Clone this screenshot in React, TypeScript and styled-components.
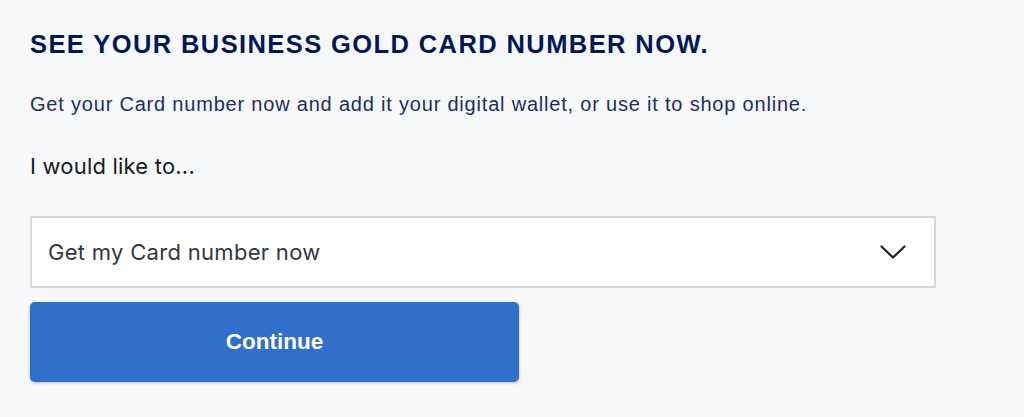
import styled, { createGlobalStyle } from "styled-components";

const GlobalStyle = createGlobalStyle`
  html, body {
    margin: 0;
    padding: 0;
    background: #f7f8fa;
  }
  body {
    font-family: "Liberation Sans", Arial, sans-serif;
  }
`;

const StyledPage = styled.div`
  display: flex;
  flex-direction: column;
  padding: 30px 30px 0 30px;
  height: 417px;
  box-sizing: border-box;
  background: #f7f8fa;
`;

const StyledTitle = styled.h1`
  margin: 0;
  font-family: "Liberation Sans", Arial, sans-serif;
  font-size: 25.5px;
  line-height: 28px;
  font-weight: 700;
  letter-spacing: 1.4px;
  color: #00175a;
`;

const StyledIntro = styled.p`
  margin: 34px 0 0 0;
  font-family: "Liberation Sans", Arial, sans-serif;
  font-size: 20px;
  line-height: 24px;
  letter-spacing: 0.8px;
  color: #1c2d68;
`;

const StyledLabel = styled.div`
  margin-top: 36px;
  font-family: Inter, "Open Sans", sans-serif;
  font-size: 22px;
  line-height: 28px;
  letter-spacing: 0.2px;
  color: #1a1a1a;
`;

const StyledSelect = styled.div`
  display: flex;
  align-items: center;
  justify-content: space-between;
  margin-top: 36px;
  width: 906px;
  height: 72px;
  box-sizing: border-box;
  padding: 0 28px 0 16px;
  background: #ffffff;
  border: 2px solid #d7d8da;
  font-family: Inter, "Open Sans", sans-serif;
  font-size: 22px;
  letter-spacing: 0.3px;
  color: #333840;
`;

const StyledButton = styled.button`
  margin-top: 14px;
  width: 489px;
  height: 80px;
  border: none;
  border-radius: 5px;
  background: #316fca;
  box-shadow: 0 1px 3px rgba(0, 0, 0, 0.25);
  color: #ffffff;
  font-family: "Liberation Sans", Arial, sans-serif;
  font-size: 22.5px;
  font-weight: 700;
  cursor: pointer;
`;

function Chevron() {
  return (
    <svg width="26" height="16" viewBox="0 0 26 16" fill="none">
      <path
        d="M1.5 2.5 L13 13.5 L24.5 2.5"
        stroke="#1f1f1f"
        strokeWidth="2.2"
        strokeLinecap="round"
        strokeLinejoin="round"
      />
    </svg>
  );
}

function App() {
  return (
    <StyledPage>
      <GlobalStyle />
      <StyledTitle>SEE YOUR BUSINESS GOLD CARD NUMBER NOW.</StyledTitle>
      <StyledIntro>
        Get your Card number now and add it your digital wallet, or use it to
        shop online.
      </StyledIntro>
      <StyledLabel>I would like to...</StyledLabel>
      <StyledSelect>
        <span>Get my Card number now</span>
        <Chevron />
      </StyledSelect>
      <StyledButton>Continue</StyledButton>
    </StyledPage>
  );
}

export default App;
